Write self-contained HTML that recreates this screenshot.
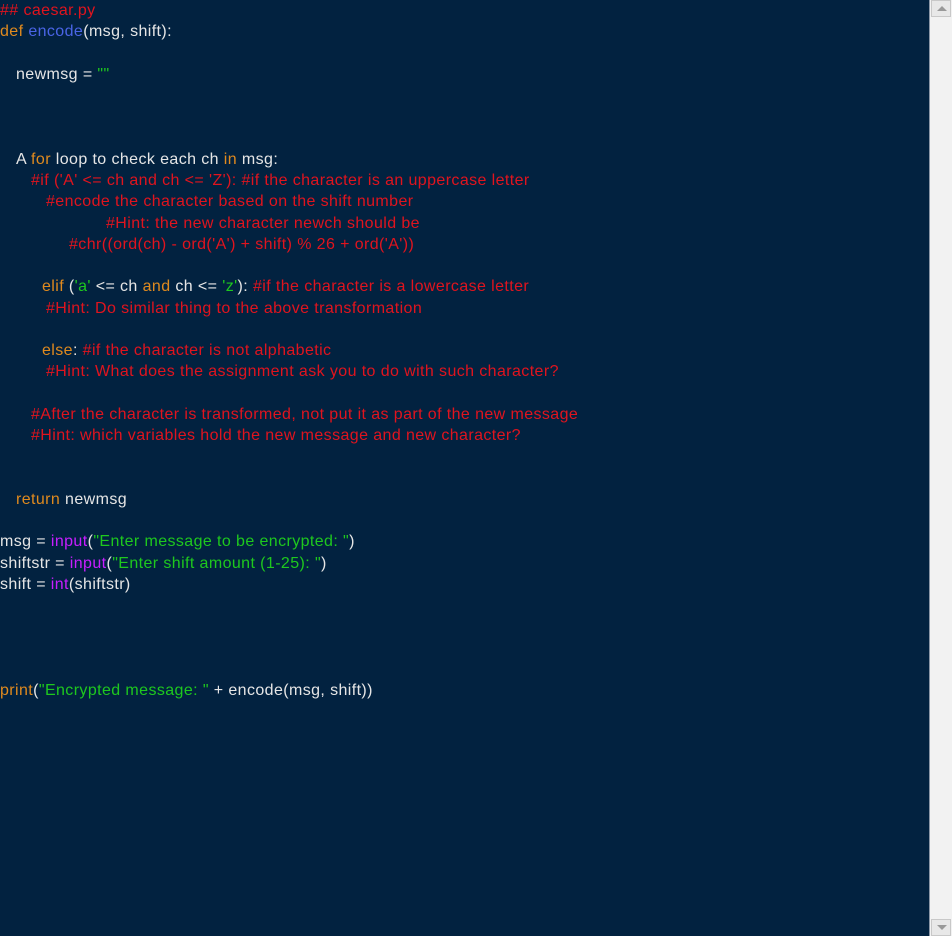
<!DOCTYPE html>
<html><head><meta charset="utf-8"><style>
html,body{margin:0;padding:0;width:952px;height:936px;overflow:hidden;background:#022240;}
#c{position:absolute;left:0;top:0;font-family:"Liberation Sans",sans-serif;font-size:16px;letter-spacing:0.4px;line-height:21.25px;color:#e6e6e6;}
.l{height:21.25px;white-space:pre}
.r{color:#e0141e}.o{color:#e08a1e}.b{color:#4a64e6}.g{color:#1ec81e}.m{color:#c81eff}
#sb{position:absolute;left:929px;top:0;width:23px;height:936px;background:#f2f2f2;border-left:1px solid #8a96a6;box-sizing:border-box}
.btn{position:absolute;left:1px;width:20px;height:17px;background:#e8e8e8;border:1px solid #c8c8c8;box-sizing:border-box}
.up{top:0}.dn{bottom:0}
.up:after{content:"";position:absolute;left:5px;top:5px;border-left:5px solid transparent;border-right:5px solid transparent;border-bottom:5px solid #999}
.dn:after{content:"";position:absolute;left:5px;top:5px;border-left:5px solid transparent;border-right:5px solid transparent;border-top:5px solid #999}
</style></head><body>
<div id="c"><div class="l r">## caesar.py</div><div class="l"><span class="o">def</span> <span class="b">encode</span>(msg, shift):</div><div class="l"></div><div class="l" style="padding-left:16px">newmsg = <span class="g">""</span></div><div class="l"></div><div class="l"></div><div class="l"></div><div class="l" style="padding-left:16px">A <span class="o">for</span> loop to check each ch <span class="o">in</span> msg:</div><div class="l r" style="padding-left:31px">#if ('A' &lt;= ch and ch &lt;= 'Z'): #if the character is an uppercase letter</div><div class="l r" style="padding-left:46px">#encode the character based on the shift number</div><div class="l r" style="padding-left:106px">#Hint: the new character newch should be</div><div class="l r" style="padding-left:69px">#chr((ord(ch) - ord('A') + shift) % 26 + ord('A'))</div><div class="l"></div><div class="l" style="padding-left:42px"><span class="o">elif</span> (<span class="g">'a'</span> &lt;= ch <span class="o">and</span> ch &lt;= <span class="g">'z'</span>): <span class="r">#if the character is a lowercase letter</span></div><div class="l r" style="padding-left:46px">#Hint: Do similar thing to the above transformation</div><div class="l"></div><div class="l" style="padding-left:42px"><span class="o">else</span>: <span class="r">#if the character is not alphabetic</span></div><div class="l r" style="padding-left:46px">#Hint: What does the assignment ask you to do with such character?</div><div class="l"></div><div class="l r" style="padding-left:31px">#After the character is transformed, not put it as part of the new message</div><div class="l r" style="padding-left:31px">#Hint: which variables hold the new message and new character?</div><div class="l"></div><div class="l"></div><div class="l" style="padding-left:16px"><span class="o">return</span> newmsg</div><div class="l"></div><div class="l">msg = <span class="m">input</span>(<span class="g">"Enter message to be encrypted: "</span>)</div><div class="l">shiftstr = <span class="m">input</span>(<span class="g">"Enter shift amount (1-25): "</span>)</div><div class="l">shift = <span class="m">int</span>(shiftstr)</div><div class="l"></div><div class="l"></div><div class="l"></div><div class="l"></div><div class="l"><span class="o">print</span>(<span class="g">"Encrypted message: "</span> + encode(msg, shift))</div></div>
<div id="sb"><div class="btn up"></div><div class="btn dn"></div></div>
</body></html>
